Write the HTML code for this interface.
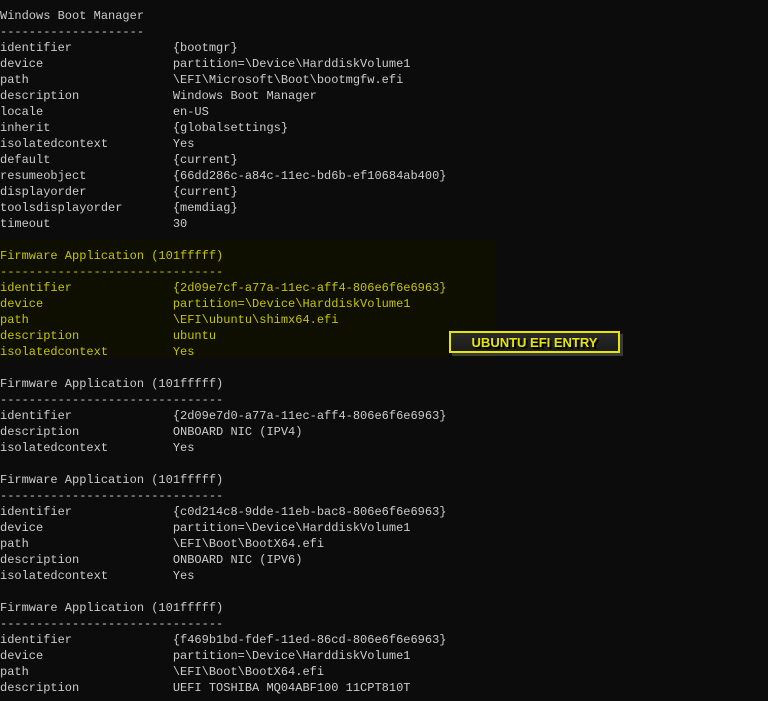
<!DOCTYPE html>
<html><head><style>
html,body{margin:0;padding:0;background:#0c0c0c;width:768px;height:701px;overflow:hidden}
pre{margin:0;position:absolute;left:0;top:8px;font-family:"Liberation Mono",monospace;font-size:12px;line-height:16px;color:#cccccc;letter-spacing:0}
.hl{position:absolute;left:0;top:240px;width:495px;height:118px;background:#0f0f00}
.y{color:#c4c400}
.box{position:absolute;left:449px;top:331px;width:167px;height:18px;border:2px solid #e6e600;background:linear-gradient(#2a2a2a,#1a1a1a);box-shadow:3px 3px 0 #3a3a3a;font-family:"Liberation Sans",sans-serif;font-weight:bold;font-size:13px;color:#e6e600;text-align:center;line-height:19px;text-shadow:2px 2px 0 #000}
</style></head><body>
<div class="hl"></div>
<pre>Windows Boot Manager
--------------------
identifier              {bootmgr}
device                  partition=\Device\HarddiskVolume1
path                    \EFI\Microsoft\Boot\bootmgfw.efi
description             Windows Boot Manager
locale                  en-US
inherit                 {globalsettings}
isolatedcontext         Yes
default                 {current}
resumeobject            {66dd286c-a84c-11ec-bd6b-ef10684ab400}
displayorder            {current}
toolsdisplayorder       {memdiag}
timeout                 30

<span class="y">Firmware Application (101fffff)
-------------------------------
identifier              {2d09e7cf-a77a-11ec-aff4-806e6f6e6963}
device                  partition=\Device\HarddiskVolume1
path                    \EFI\ubuntu\shimx64.efi
description             ubuntu
isolatedcontext         Yes</span>

Firmware Application (101fffff)
-------------------------------
identifier              {2d09e7d0-a77a-11ec-aff4-806e6f6e6963}
description             ONBOARD NIC (IPV4)
isolatedcontext         Yes

Firmware Application (101fffff)
-------------------------------
identifier              {c0d214c8-9dde-11eb-bac8-806e6f6e6963}
device                  partition=\Device\HarddiskVolume1
path                    \EFI\Boot\BootX64.efi
description             ONBOARD NIC (IPV6)
isolatedcontext         Yes

Firmware Application (101fffff)
-------------------------------
identifier              {f469b1bd-fdef-11ed-86cd-806e6f6e6963}
device                  partition=\Device\HarddiskVolume1
path                    \EFI\Boot\BootX64.efi
description             UEFI TOSHIBA MQ04ABF100 11CPT810T</pre>
<div class="box">UBUNTU EFI ENTRY</div>
</body></html>
